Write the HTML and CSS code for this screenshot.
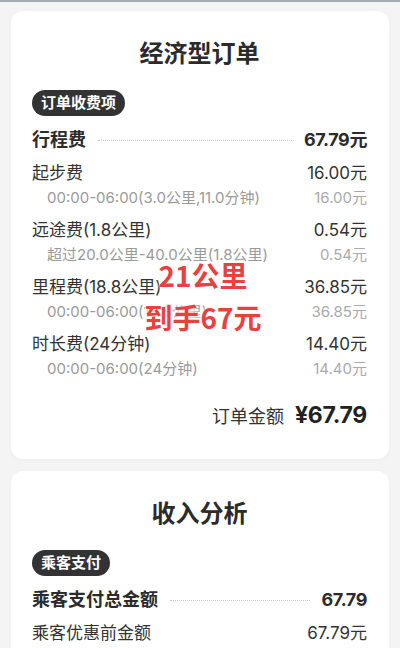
FILE: index.html
```html
<!DOCTYPE html>
<html lang="zh-CN">
<head>
    <meta charset="UTF-8">
    <meta name="viewport" content="width=device-width, initial-scale=1.0">
    <title>经济型订单</title>
    <link rel="stylesheet" href="styles.css">
</head>
<body>
    <div class="topbar"></div>

    <div class="card">
        <h2 class="title">经济型订单</h2>
        <span class="pill">订单收费项</span>

        <div class="row main">
            <span class="label">行程费</span>
            <span class="dots"></span>
            <span class="value">67.79元</span>
        </div>

        <div class="group first">
            <div class="row item"><span>起步费</span><span>16.00元</span></div>
            <div class="row sub"><span>00:00-06:00(3.0公里,11.0分钟)</span><span class="sub-value">16.00元</span></div>
        </div>
        <div class="group">
            <div class="row item"><span>远途费(1.8公里)</span><span>0.54元</span></div>
            <div class="row sub"><span>超过20.0公里-40.0公里(1.8公里)</span><span class="sub-value">0.54元</span></div>
        </div>
        <div class="group">
            <div class="row item"><span>里程费(18.8公里)</span><span>36.85元</span></div>
            <div class="row sub"><span>00:00-06:00(18.8公里)</span><span class="sub-value">36.85元</span></div>
        </div>
        <div class="group">
            <div class="row item"><span>时长费(24分钟)</span><span>14.40元</span></div>
            <div class="row sub"><span>00:00-06:00(24分钟)</span><span class="sub-value">14.40元</span></div>
        </div>

        <div class="total">
            <span class="total-label">订单金额</span>
            <span class="total-value">¥67.79</span>
        </div>

        <div class="stamp">
            <div>21公里</div>
            <div>到手67元</div>
        </div>
    </div>

    <div class="card">
        <h2 class="title">收入分析</h2>
        <span class="pill">乘客支付</span>

        <div class="row main">
            <span class="label">乘客支付总金额</span>
            <span class="dots"></span>
            <span class="value">67.79</span>
        </div>
        <div class="group first">
            <div class="row item"><span>乘客优惠前金额</span><span>67.79元</span></div>
        </div>
    </div>
</body>
</html>
```

FILE: styles.css
```css
body {
    margin: 0;
    background-color: #f4f4f4;
    font-family: Inter, "Noto Sans CJK SC", sans-serif;
    color: #333;
    overflow: hidden;
}
.topbar {
    height: 2px;
    background: #a3abb6;
}
.card {
    position: relative;
    background: white;
    margin: 9px 11px 0;
    padding: 28px 22px 27px 21px;
    border-radius: 12px;
    box-shadow: 0px 1px 4px rgba(0, 0, 0, 0.03);
}
.card + .card {
    margin-top: 12px;
}
.title {
    margin: 0;
    text-align: center;
    font-size: 24px;
    line-height: 30px;
    font-weight: 600;
    color: #2b2b2b;
}
.pill {
    display: inline-block;
    margin-top: 21px;
    padding: 0 9px;
    height: 26px;
    line-height: 26px;
    font-size: 15px;
    font-weight: 600;
    color: white;
    background: #333;
    border-radius: 13px;
}
.row {
    display: flex;
    align-items: center;
    justify-content: space-between;
}
.row.main {
    margin-top: 11px;
    line-height: 26px;
    font-size: 18px;
    font-weight: 700;
    color: #2b2b2b;
}
.row.main .value {
    letter-spacing: -0.4px;
}
.dots {
    flex: 1;
    margin: 0 12px;
    border-top: 1px dotted #c8c8c8;
}
.group {
    margin-top: 10px;
}
.group.first {
    margin-top: 8px;
}
.row.item {
    line-height: 24px;
    font-size: 17px;
    color: #333;
}
.row.sub {
    margin-top: 3px;
    padding-left: 15px;
    line-height: 20px;
    font-size: 15px;
    color: #9a9a9a;
}
.sub-value {
    color: #aaa;
}
.total {
    display: flex;
    justify-content: flex-end;
    align-items: baseline;
    margin-top: 21px;
    line-height: 30px;
}
.total-label {
    font-size: 18px;
    color: #333;
    margin-right: 11px;
}
.total-value {
    font-size: 23px;
    font-weight: 700;
    color: #222;
    letter-spacing: -0.3px;
}
.stamp {
    position: absolute;
    left: 107px;
    top: 243px;
    width: 170px;
    text-align: center;
    font-family: "Noto Sans CJK SC", sans-serif;
    font-size: 28px;
    font-weight: 700;
    line-height: 42px;
    color: #e8413f;
    text-shadow: 0 0 3px white, 0 0 6px white;
}
```
